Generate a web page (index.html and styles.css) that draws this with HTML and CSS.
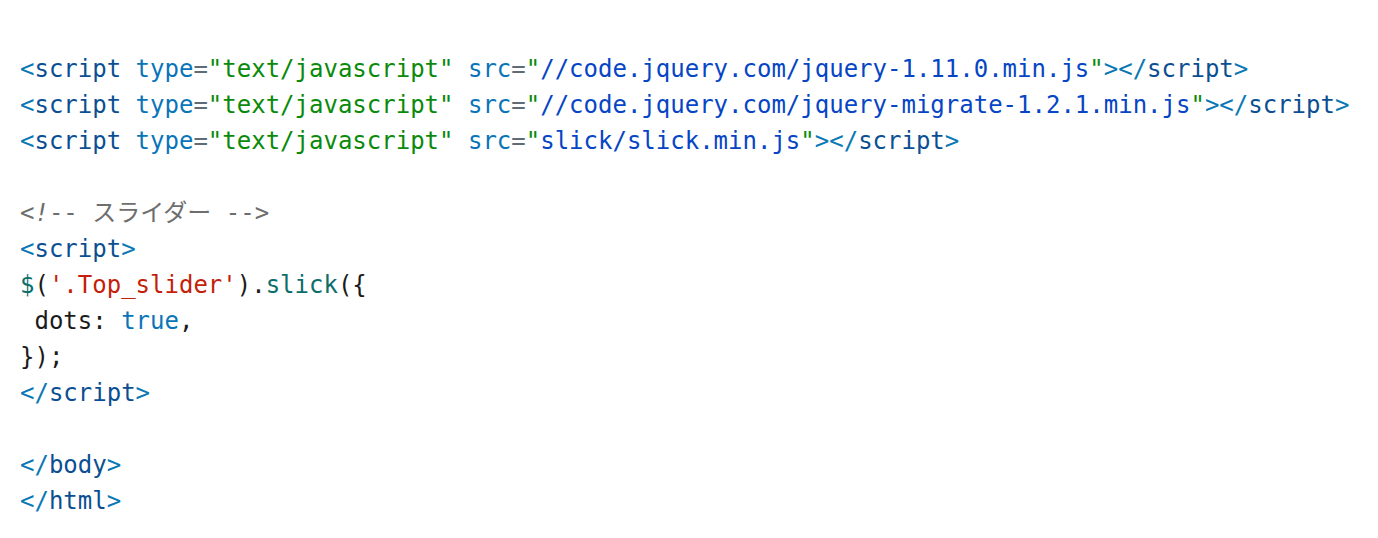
FILE: index.html
```html
<!DOCTYPE html>
<html lang="ja">
<head>
<meta charset="utf-8">
<title>code</title>
<link rel="stylesheet" href="styles.css">
</head>
<body>
<pre class="code"><span class="p">&lt;</span><span class="t">script</span> <span class="a">type</span><span class="e">=</span><span class="s">"text/javascript"</span> <span class="a">src</span><span class="e">=</span><span class="s">"</span><span class="u">//code.jquery.com/jquery-1.11.0.min.js</span><span class="s">"</span><span class="p">&gt;&lt;/</span><span class="t">script</span><span class="p">&gt;</span>
<span class="p">&lt;</span><span class="t">script</span> <span class="a">type</span><span class="e">=</span><span class="s">"text/javascript"</span> <span class="a">src</span><span class="e">=</span><span class="s">"</span><span class="u">//code.jquery.com/jquery-migrate-1.2.1.min.js</span><span class="s">"</span><span class="p">&gt;&lt;/</span><span class="t">script</span><span class="p">&gt;</span>
<span class="p">&lt;</span><span class="t">script</span> <span class="a">type</span><span class="e">=</span><span class="s">"text/javascript"</span> <span class="a">src</span><span class="e">=</span><span class="s">"</span><span class="u">slick/slick.min.js</span><span class="s">"</span><span class="p">&gt;&lt;/</span><span class="t">script</span><span class="p">&gt;</span>

<span class="c">&lt;<i>!</i>-- <span class="jp">スライダー</span> --&gt;</span>
<span class="p">&lt;</span><span class="t">script</span><span class="p">&gt;</span>
<span class="f">$</span>(<span class="r">'.Top_slider'</span>).<span class="f">slick</span>({
 dots: <span class="k">true</span>,
});
<span class="p">&lt;/</span><span class="t">script</span><span class="p">&gt;</span>

<span class="p">&lt;/</span><span class="t">body</span><span class="p">&gt;</span>
<span class="p">&lt;/</span><span class="t">html</span><span class="p">&gt;</span></pre>
</body>
</html>
```

FILE: styles.css
```css
html, body {
  margin: 0;
  padding: 0;
  background: #ffffff;
}

.code {
  margin: 0;
  padding: 51px 20px 0 20px;
  font-family: "DejaVu Sans Mono", "Noto Sans CJK JP", monospace;
  font-size: 24px;
  line-height: 36px;
  color: #1b1b1b;
  white-space: pre;
}

.p { color: #0a78b4; }
.t { color: #0b4f92; }
.a { color: #0a74b8; }
.e { color: #5f6b75; }
.s { color: #0a8a0a; }
.u { color: #0645c4; }
.c { color: #6e6e6e; }
.c i { font-style: italic; }
.jp {
  font-family: "Noto Sans CJK JP", sans-serif;
  line-height: 1;
  vertical-align: top;
  display: inline-block;
  padding-top: 4px;
}
.f { color: #0d6e6a; }
.r { color: #c41f0a; }
.k { color: #0a74b8; }
```
